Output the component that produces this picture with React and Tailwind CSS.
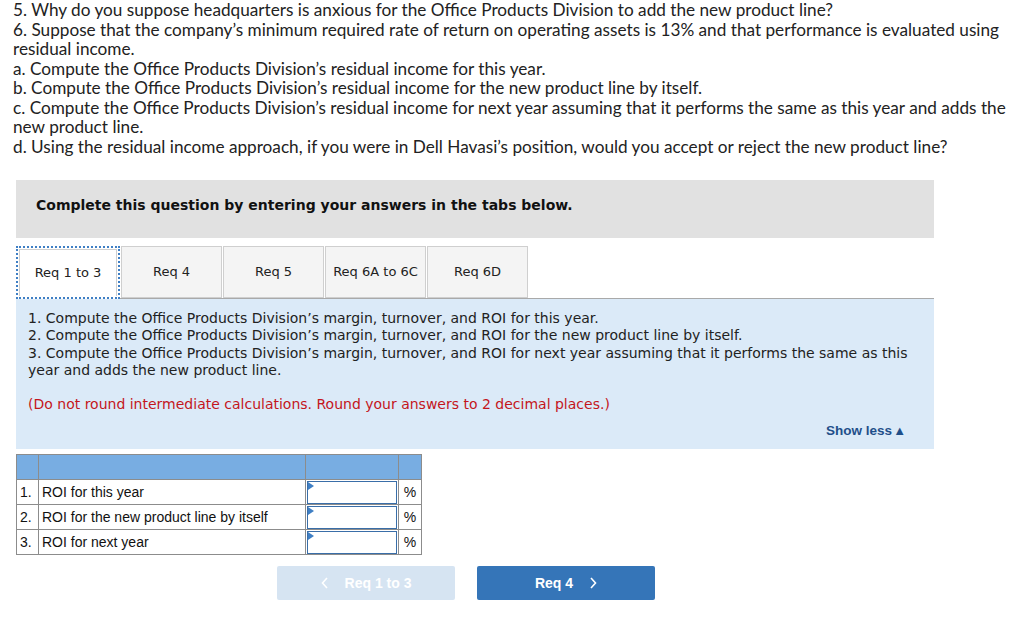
import React from 'react';

const intro = [
    '5. Why do you suppose headquarters is anxious for the Office Products Division to add the new product line?',
    '6. Suppose that the company\u2019s minimum required rate of return on operating assets is 13% and that performance is evaluated using residual income.',
    'a. Compute the Office Products Division\u2019s residual income for this year.',
    'b. Compute the Office Products Division\u2019s residual income for the new product line by itself.',
    'c. Compute the Office Products Division\u2019s residual income for next year assuming that it performs the same as this year and adds the new product line.',
    'd. Using the residual income approach, if you were in Dell Havasi\u2019s position, would you accept or reject the new product line?',
];

const tabs = ['Req 1 to 3', 'Req 4', 'Req 5', 'Req 6A to 6C', 'Req 6D'];

const rows = [
    ['1.', 'ROI for this year'],
    ['2.', 'ROI for the new product line by itself'],
    ['3.', 'ROI for next year'],
];

function Tab({ label, active }) {
    if (active) {
        return (
            <div className="w-[104px] h-[53px] border-2 border-dotted border-[#3f7fc4] p-px bg-white relative z-10 -mb-px">
                <div className="h-full border border-[#cfcfcf] border-b-0 flex items-center justify-center text-[13px] text-[#222]">
                    {label}
                </div>
            </div>
        );
    }
    return (
        <div className="w-[101px] h-[52px] border border-[#cfcfcf] bg-[#f4f4f4] flex items-center justify-center text-[13px] text-[#222] ml-[1px]">
            {label}
        </div>
    );
}

export default function App() {
    return (
        <div className="w-[1024px] h-[628px] bg-white overflow-hidden">
            <div className="pl-[13px] text-[17.2px] leading-[19.5px] text-[#222]" style={{ fontFamily: 'Lato, "Open Sans", sans-serif' }}>
                {intro.map((t) => (
                    <p key={t}>{t}</p>
                ))}
            </div>

            <div className="ml-4 w-[918px] mt-[24px]" style={{ fontFamily: '"DejaVu Sans", Verdana, sans-serif' }}>
                <div className="h-[58px] bg-[#e1e1e1] pl-5 pt-[15px] text-[14px] font-bold text-[#111]">
                    Complete this question by entering your answers in the tabs below.
                </div>

                <div className="mt-2 flex items-end border-b border-[#a9a9a9]">
                    {tabs.map((t, i) => (
                        <Tab key={t} label={t} active={i === 0} />
                    ))}
                </div>

                <div className="bg-[#dbeaf8] h-[150px] pl-3 pr-[14px] pt-[11px] text-[14px] leading-[17.3px] text-[#222] relative">
                    <p>1. Compute the Office Products Division’s margin, turnover, and ROI for this year.</p>
                    <p>2. Compute the Office Products Division’s margin, turnover, and ROI for the new product line by itself.</p>
                    <p>3. Compute the Office Products Division’s margin, turnover, and ROI for next year assuming that it performs the same as this year and adds the new product line.</p>
                    <p className="mt-[17px] text-[#c4161c]">(Do not round intermediate calculations. Round your answers to 2 decimal places.)</p>
                    <div className="absolute right-[28px] bottom-[10px] text-[13.5px] font-bold text-[#1f4f8a] flex items-center" style={{ fontFamily: '"Liberation Sans", Arial, sans-serif' }}>
                        Show less
                        <span className="ml-px text-[13px]">▲</span>
                    </div>
                </div>
            </div>

            <table className="ml-4 mt-[5px] border-collapse text-[14px] text-[#111]" style={{ fontFamily: '"Liberation Sans", Arial, sans-serif' }}>
                <thead>
                    <tr className="bg-[#78ade2] h-[25px]">
                        <th className="w-[22px] border border-[#8c8c8c]"></th>
                        <th className="w-[267px] border border-[#8c8c8c]"></th>
                        <th className="w-[93px] border border-[#8c8c8c]"></th>
                        <th className="w-[23px] border border-[#8c8c8c]"></th>
                    </tr>
                </thead>
                <tbody>
                    {rows.map(([n, l]) => (
                        <tr key={n} className="h-[25px]">
                            <td className="border border-[#8c8c8c] pl-[3px] leading-[16px]">{n}</td>
                            <td className="border border-[#8c8c8c] pl-[3px] leading-[16px]">{l}</td>
                            <td className="border border-[#8c8c8c] p-0">
                                <div className="relative h-[23px] mx-px border border-[#3a6ea8] bg-white">
                                    <span className="absolute left-0 top-0 w-0 h-0 border-t-[4px] border-b-[4px] border-l-[6px] border-t-transparent border-b-transparent border-l-[#3f7fc4]"></span>
                                </div>
                            </td>
                            <td className="border border-[#8c8c8c] text-center leading-[16px]">%</td>
                        </tr>
                    ))}
                </tbody>
            </table>

            <div className="flex ml-[277px] mt-[11px] gap-[22px] text-[14px] font-bold text-white" style={{ fontFamily: '"Liberation Sans", Arial, sans-serif' }}>
                <div className="w-[178px] h-[34px] rounded-[2px] bg-[#d6e4f2] flex items-center justify-center gap-4">
                    <svg width="8" height="12" viewBox="0 0 8 12" fill="none" stroke="white" strokeWidth="1.6"><path d="M6 1L1.5 6L6 11" /></svg>
                    <span>Req 1 to 3</span>
                </div>
                <div className="w-[178px] h-[34px] rounded-[2px] bg-[#3575b8] flex items-center justify-center gap-4">
                    <span>Req 4</span>
                    <svg width="8" height="12" viewBox="0 0 8 12" fill="none" stroke="white" strokeWidth="1.6"><path d="M2 1L6.5 6L2 11" /></svg>
                </div>
            </div>
        </div>
    );
}
